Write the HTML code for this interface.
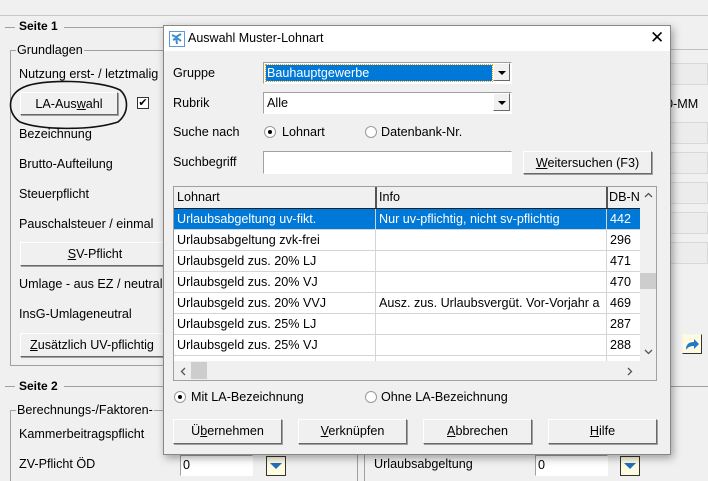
<!DOCTYPE html>
<html><head><meta charset="utf-8"><style>
*{box-sizing:border-box;margin:0;padding:0}
html,body{width:708px;height:481px;overflow:hidden}
body{background:#f0f0f0;font-family:"Liberation Sans",sans-serif;font-size:12.6px;color:#000;position:relative}
.a{position:absolute;white-space:nowrap}
.btn{position:absolute;background:#f0f0f0;border:1px solid #fff;border-right-color:#696969;border-bottom-color:#696969;box-shadow:1px 1px 0 #a0a0a0;text-align:center;line-height:22px}
.inp{position:absolute;background:#fff;border:1px solid #a0a0a0;border-right-color:#fff;border-bottom-color:#fff}
.gray{position:absolute;background:#ececec;border:1px solid #d8d8d8}
.hl{position:absolute;height:1px;background:#d0d0d0}
.u{text-decoration:underline}
.row{position:absolute;left:0;width:466px;height:21px;border-bottom:1px solid #d4d4d4;line-height:20px}
.row span{position:absolute;top:0}
.radio{position:absolute;width:12px;height:12px;border-radius:50%;border:1px solid #999;background:#fff}
.radio.on::after{content:"";position:absolute;left:3px;top:3px;width:4px;height:4px;border-radius:50%;background:#000}
.dd{position:absolute;width:17px;height:18px;background:#f0f0f0;border:1px solid #fff;border-right-color:#696969;border-bottom-color:#696969}
.dd::after{content:"";position:absolute;left:4px;top:7px;border-left:4px solid transparent;border-right:4px solid transparent;border-top:4px solid #000}
</style></head><body>
<div class="hl" style="left:0;top:15px;width:708px;background:#c8c8c8"></div>
<div class="hl" style="left:5px;top:27px;width:10px;background:#a0a0a0"></div>
<div class="a" style="left:19px;top:19px;font-weight:bold;font-size:12px">Seite 1</div>
<div class="hl" style="left:64px;top:27px;width:100px;background:#a0a0a0"></div>
<div style="position:absolute;left:10px;top:50px;width:170px;height:316px;border:1px solid #a0a0a0;border-right:none"></div>
<div class="a" style="left:16px;top:43px;background:#f0f0f0;padding:0 1px">Grundlagen</div>
<div class="a" style="left:19px;top:67px">Nutzung erst- / letztmalig</div>
<div class="btn" style="left:20px;top:92px;width:98px;height:23px">LA-Aus<span class="u">w</span>ahl</div>
<div style="position:absolute;left:137px;top:97px;width:12px;height:12px;border:1px solid #333;background:#fff;font-size:11px;line-height:10px;text-align:center">✔</div>
<svg class="a" style="left:0;top:0" width="200" height="140"><path d="M22 88 C40 78,100 80,120 90 C128 97,130 112,118 122 C90 131,40 130,20 122 C8 114,6 96,22 88 Z" fill="none" stroke="#111" stroke-width="1.6"/></svg>
<div class="a" style="left:19px;top:127px">Bezeichnung</div>
<div class="a" style="left:19px;top:157px">Brutto-Aufteilung</div>
<div class="a" style="left:19px;top:187px">Steuerpflicht</div>
<div class="a" style="left:19px;top:217px">Pauschalsteuer / einmal</div>
<div class="btn" style="left:20px;top:242px;width:150px;height:24px"><span class="u">S</span>V-Pflicht</div>
<div class="a" style="left:19px;top:277px">Umlage - aus EZ / neutral</div>
<div class="a" style="left:19px;top:307px">InsG-Umlageneutral</div>
<div class="btn" style="left:20px;top:333px;width:150px;height:24px;text-align:left;padding-left:9px"><span class="u">Z</span>usätzlich UV-pflichtig</div>
<div class="hl" style="left:5px;top:386px;width:10px;background:#a0a0a0"></div>
<div class="a" style="left:19px;top:379px;font-weight:bold;font-size:12px">Seite 2</div>
<div class="hl" style="left:64px;top:386px;width:100px;background:#a0a0a0"></div>
<div class="hl" style="left:670px;top:386px;width:38px;background:#a0a0a0"></div>
<div style="position:absolute;left:10px;top:410px;width:170px;height:80px;border:1px solid #a0a0a0;border-right:none"></div>
<div class="a" style="left:16px;top:403px;background:#f0f0f0;padding:0 1px">Berechnungs-/Faktoren-</div>
<div class="a" style="left:19px;top:427px">Kammerbeitragspflicht</div>
<div class="a" style="left:19px;top:457px">ZV-Pflicht ÖD</div>
<div class="inp" style="left:180px;top:455px;width:73px;height:21px;padding-left:2px;line-height:18px">0</div>
<svg class="a" style="left:266px;top:456px" width="20" height="20"><rect x="0.5" y="0.5" width="19" height="19" fill="#fffbe0" stroke="#333"/><path d="M4 7h12l-6 6z" fill="#1f6fc0"/></svg>
<div style="position:absolute;left:357px;top:455px;width:1px;height:30px;background:#a0a0a0"></div>
<div style="position:absolute;left:364px;top:455px;width:1px;height:30px;background:#a0a0a0"></div>
<div class="a" style="left:374px;top:457px">Urlaubsabgeltung</div>
<div class="inp" style="left:535px;top:455px;width:73px;height:21px;padding-left:2px;line-height:18px">0</div>
<svg class="a" style="left:620px;top:456px" width="20" height="20"><rect x="0.5" y="0.5" width="19" height="19" fill="#fffbe0" stroke="#333"/><path d="M4 7h12l-6 6z" fill="#1f6fc0"/></svg>
<div class="hl" style="left:670px;top:49px;width:38px;background:#c0c0c0"></div>
<div class="gray" style="left:668px;top:63px;width:40px;height:22px"></div>
<div class="a" style="left:666px;top:97px">0-MM</div>
<div class="gray" style="left:668px;top:122px;width:40px;height:22px"></div>
<div class="gray" style="left:668px;top:152px;width:40px;height:22px"></div>
<div class="gray" style="left:668px;top:182px;width:40px;height:22px"></div>
<div class="gray" style="left:668px;top:212px;width:40px;height:22px"></div>
<div class="gray" style="left:668px;top:242px;width:40px;height:22px"></div>
<svg class="a" style="left:682px;top:334px" width="20" height="20"><rect x="0.5" y="0.5" width="19" height="19" fill="#fffbe0"/><path d="M0.5 19.5H19.5V0.5" fill="none" stroke="#333"/><path d="M4 16c0-6 3-8 8-8V5l5 5-5 5v-3c-4 0-6 1-8 4z" fill="#1f78c8"/></svg>
<div style="position:absolute;left:163px;top:25px;width:508px;height:430px;background:#f0f0f0;border:1px solid #888;box-shadow:2px 3px 8px rgba(0,0,0,.35)">
 <div style="position:absolute;left:0;top:0;width:506px;height:25px;background:#fff"></div>
 <svg class="a" style="left:5px;top:5px" width="16" height="16"><rect x="0.5" y="0.5" width="15" height="15" fill="#fff" stroke="#5a9ad8"/><path d="M3 4l4 2 5-3M4 9l4-2 4 3M7 6l1 7" stroke="#3a8fd0" stroke-width="2" fill="none"/></svg>
 <div class="a" style="left:24px;top:5px;font-size:12.5px">Auswahl Muster-Lohnart</div>
 <div class="a" style="left:486px;top:2px;font-size:17px">✕</div>
</div>
<div class="a" style="left:173px;top:66px">Gruppe</div>
<div class="inp" style="left:263px;top:62px;width:249px;height:22px"><div style="position:absolute;left:2px;top:2px;width:226px;height:16px;background:#0078d7;color:#fff;outline:1px dotted #f0a000;line-height:16px;padding-left:1px">Bauhauptgewerbe</div></div>
<div class="dd" style="left:493px;top:63px"></div>
<div class="a" style="left:173px;top:96px">Rubrik</div>
<div class="inp" style="left:263px;top:92px;width:249px;height:22px;padding-left:3px;line-height:20px">Alle</div>
<div class="dd" style="left:493px;top:93px"></div>
<div class="a" style="left:173px;top:125px">Suche nach</div>
<div class="radio on" style="left:264px;top:126px"></div>
<div class="a" style="left:282px;top:125px">Lohnart</div>
<div class="radio" style="left:365px;top:126px"></div>
<div class="a" style="left:381px;top:125px">Datenbank-Nr.</div>
<div class="a" style="left:173px;top:155px">Suchbegriff</div>
<div class="inp" style="left:263px;top:151px;width:249px;height:23px"></div>
<div class="btn" style="left:523px;top:151px;width:129px;height:23px"><span class="u">W</span>eitersuchen (F3)</div>
<div style="position:absolute;left:173px;top:186px;width:484px;height:195px;border:1px solid #a0a0a0;background:#fff;overflow:hidden">
 <div style="position:absolute;left:0;top:0;width:466px;height:22px;background:#f0f0f0;border-bottom:1px solid #222">
  <span class="a" style="left:3px;top:3px">Lohnart</span>
  <div style="position:absolute;left:201px;top:0;width:2px;height:21px;background:#555"></div>
  <span class="a" style="left:205px;top:3px">Info</span>
  <div style="position:absolute;left:432px;top:0;width:2px;height:21px;background:#555"></div>
  <span class="a" style="left:435px;top:3px">DB-N</span>
 </div>
 <div style="position:absolute;left:0;top:22px;width:466px;height:152px">
  <div class="row" style="top:0;background:#0078d7;color:#fff"><span style="left:3px">Urlaubsabgeltung uv-fikt.</span><span style="left:205px">Nur uv-pflichtig, nicht sv-pflichtig</span><span style="left:436px">442</span></div>
  <div class="row" style="top:21px"><span style="left:3px">Urlaubsabgeltung zvk-frei</span><span style="left:436px">296</span></div>
  <div class="row" style="top:42px"><span style="left:3px">Urlaubsgeld zus. 20% LJ</span><span style="left:436px">471</span></div>
  <div class="row" style="top:63px"><span style="left:3px">Urlaubsgeld zus. 20% VJ</span><span style="left:436px">470</span></div>
  <div class="row" style="top:84px"><span style="left:3px">Urlaubsgeld zus. 20% VVJ</span><span style="left:205px;width:228px;overflow:hidden">Ausz. zus. Urlaubsvergüt. Vor-Vorjahr a</span><span style="left:436px">469</span></div>
  <div class="row" style="top:105px"><span style="left:3px">Urlaubsgeld zus. 25% LJ</span><span style="left:436px">287</span></div>
  <div class="row" style="top:126px"><span style="left:3px">Urlaubsgeld zus. 25% VJ</span><span style="left:436px">288</span></div>
  <div style="position:absolute;left:201px;top:0;width:1px;height:152px;background:#d4d4d4"></div>
  <div style="position:absolute;left:432px;top:0;width:1px;height:152px;background:#d4d4d4"></div>
 </div>
 <div style="position:absolute;left:466px;top:0;width:17px;height:174px;background:#f0f0f0">
  <svg class="a" style="left:4px;top:5px" width="9" height="6"><path d="M1 5l3.5-3.5L8 5" fill="none" stroke="#555" stroke-width="1.3"/></svg>
  <div style="position:absolute;left:0;top:86px;width:17px;height:16px;background:#cdcdcd"></div>
  <svg class="a" style="left:4px;top:162px" width="9" height="6"><path d="M1 1l3.5 3.5L8 1" fill="none" stroke="#555" stroke-width="1.3"/></svg>
 </div>
 <div style="position:absolute;left:0;top:174px;width:483px;height:20px;background:#f0f0f0">
  <svg class="a" style="left:6px;top:6px" width="6" height="9"><path d="M5 1L1.5 4.5L5 8" fill="none" stroke="#555" stroke-width="1.3"/></svg>
  <div style="position:absolute;left:17px;top:1px;width:16px;height:17px;background:#cdcdcd"></div>
  <svg class="a" style="left:453px;top:6px" width="6" height="9"><path d="M1 1l3.5 3.5L1 8" fill="none" stroke="#555" stroke-width="1.3"/></svg>
 </div>
</div>
<div class="radio on" style="left:174px;top:391px"></div>
<div class="a" style="left:191px;top:390px">Mit LA-Bezeichnung</div>
<div class="radio" style="left:365px;top:391px"></div>
<div class="a" style="left:381px;top:390px">Ohne LA-Bezeichnung</div>
<div class="btn" style="left:173px;top:419px;width:109px;height:25px">Ü<span class="u">b</span>ernehmen</div>
<div class="btn" style="left:298px;top:419px;width:109px;height:25px"><span class="u">V</span>erknüpfen</div>
<div class="btn" style="left:423px;top:419px;width:109px;height:25px"><span class="u">A</span>bbrechen</div>
<div class="btn" style="left:548px;top:419px;width:109px;height:25px"><span class="u">H</span>ilfe</div>
</body></html>
